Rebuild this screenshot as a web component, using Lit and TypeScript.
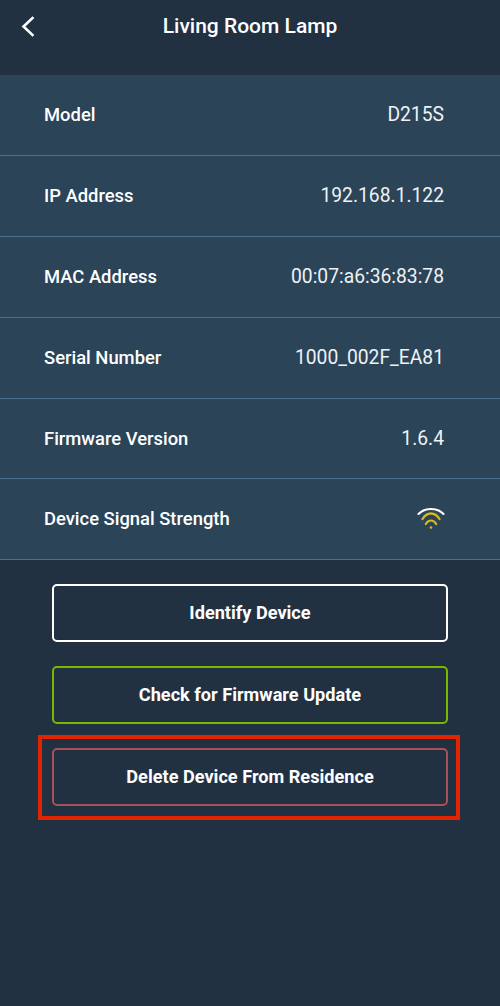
import { LitElement, html, css } from "lit";
import { customElement } from "lit/decorators.js";

const rows: [string, string][] = [
  ["Model", "D215S"],
  ["IP Address", "192.168.1.122"],
  ["MAC Address", "00:07:a6:36:83:78"],
  ["Serial Number", "1000_002F_EA81"],
  ["Firmware Version", "1.6.4"],
];

@customElement("app-root")
export class AppRoot extends LitElement {
  static styles = css`
    :host {
      display: block;
      width: 500px;
      height: 1006px;
      background: #213141;
      color: #fff;
      font-family: Roboto, "Liberation Sans", sans-serif;
      overflow: hidden;
    }
    .header {
      height: 75px;
      box-sizing: border-box;
      display: flex;
      align-items: flex-start;
      justify-content: center;
      padding-top: 12px;
      position: relative;
    }
    .title {
      font-size: 21px;
      font-weight: 500;
      line-height: 28px;
    }
    .back {
      position: absolute;
      left: 20px;
      top: 14px;
      width: 16px;
      height: 24px;
    }
    .rows {
      background: #2b4458;
    }
    .row {
      height: 80.9px;
      box-sizing: border-box;
      border-bottom: 1px solid #4a6e90;
      padding: 0 56px 1px 44px;
      display: flex;
      align-items: center;
      justify-content: space-between;
      font-size: 18.4px;
    }
    .label {
      font-weight: 500;
    }
    .value {
      font-size: 19.3px;
      font-weight: 400;
      color: #eef2f5;
    }
    .wifi {
      width: 30px;
      height: 24px;
      margin-right: -1.5px;
      display: block;
    }
    .buttons {
      display: flex;
      flex-direction: column;
      gap: 24px;
      padding: 24px 52px 0;
    }
    .btn {
      position: relative;
      height: 58px;
      box-sizing: border-box;
      border: 2px solid #fff;
      border-radius: 5px;
      display: flex;
      align-items: center;
      justify-content: center;
      font-size: 18.15px;
      font-weight: 700;
      padding-bottom: 1px;
    }
    .green {
      border-color: #76b900;
    }
    .red {
      border-color: #a9505a;
    }
    .mark {
      position: absolute;
      left: -16px;
      right: -14px;
      top: -15px;
      bottom: -16px;
      border: 4px solid #e32400;
      pointer-events: none;
    }
  `;

  render() {
    return html`
      <div class="header">
        <svg class="back" viewBox="0 0 16 24" fill="none" stroke="#fff" stroke-width="2.6" stroke-linecap="square">
          <path d="M12.5 4 L3.5 12.5 L12.5 21"></path>
        </svg>
        <div class="title">Living Room Lamp</div>
      </div>
      <div class="rows">
        ${rows.map(
          ([k, v]) => html`<div class="row"><span class="label">${k}</span><span class="value">${v}</span></div>`
        )}
        <div class="row">
          <span class="label">Device Signal Strength</span>
          <svg class="wifi" viewBox="0 0 30 24" fill="none" stroke-linecap="round">
            <path d="M2.5 7 C9 0.3 21 0.3 27.5 7" stroke="#fff" stroke-width="2.1"></path>
            <path d="M6.5 13 C11 5.7 19 5.7 23.5 13" stroke="#d8b91f" stroke-width="2.3" transform="translate(0 -1)"></path>
            <path d="M9.8 17 C12.5 12.3 17.5 12.3 20.2 17" stroke="#d8b91f" stroke-width="2.2"></path>
            <circle cx="15" cy="20.5" r="1.3" fill="#d8b91f"></circle>
          </svg>
        </div>
      </div>
      <div class="buttons">
        <div class="btn">Identify Device</div>
        <div class="btn green">Check for Firmware Update</div>
        <div class="btn red">Delete Device From Residence<span class="mark"></span></div>
      </div>
    `;
  }
}
